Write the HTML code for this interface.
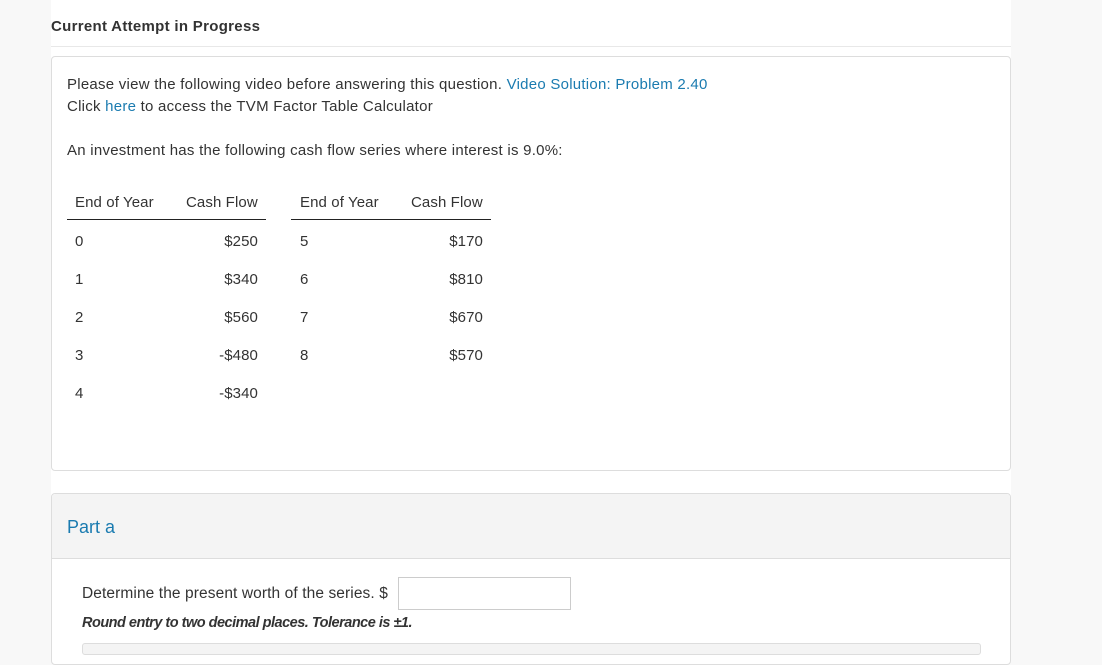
<!DOCTYPE html>
<html><head><meta charset="utf-8"><style>
html,body{margin:0;padding:0;width:1102px;height:648px;overflow:hidden;background:#f8f8f8;font-family:"Liberation Sans",sans-serif;color:#333}
.main{position:absolute;left:51px;top:0;width:960px;height:648px;background:#fff}
.abs{position:absolute;white-space:nowrap}
a{color:#1a7bb0;text-decoration:none}
.t{font-size:15px;letter-spacing:0.1px}
</style></head><body>
<div class="main"></div>
<div class="abs" style="left:51px;top:18px;font-size:15px;font-weight:bold;color:#333;letter-spacing:0.3px">Current Attempt in Progress</div>
<div class="abs" style="left:51px;top:46px;width:960px;height:1px;background:#e8e8e8"></div>
<div class="abs" style="left:51px;top:56px;width:958px;height:413px;border:1px solid #ddd;border-radius:4px;background:#fff"></div>
<div class="abs t" style="left:67px;top:76px;letter-spacing:0.25px">Please view the following video before answering this question. <a>Video Solution: Problem 2.40</a></div>
<div class="abs t" style="left:67px;top:98px;letter-spacing:0.25px">Click <a>here</a> to access the TVM Factor Table Calculator</div>
<div class="abs t" style="left:67px;top:142px;letter-spacing:0.25px">An investment has the following cash flow series where interest is 9.0%:</div>
<div class="abs t" style="left:75px;top:194px">End of Year</div>
<div class="abs t" style="left:186px;top:194px">Cash Flow</div>
<div class="abs t" style="left:300px;top:194px">End of Year</div>
<div class="abs t" style="left:411px;top:194px">Cash Flow</div>
<div class="abs" style="left:67px;top:219px;width:199px;height:1px;background:#222"></div>
<div class="abs" style="left:291px;top:219px;width:200px;height:1px;background:#222"></div>
<div class="abs t" style="left:75px;top:223px;line-height:38px">0<br>1<br>2<br>3<br>4</div>
<div class="abs t" style="left:180px;width:78px;text-align:right;top:223px;line-height:38px">$250<br>$340<br>$560<br>-$480<br>-$340</div>
<div class="abs t" style="left:300px;top:223px;line-height:38px">5<br>6<br>7<br>8</div>
<div class="abs t" style="left:404px;width:79px;text-align:right;top:223px;line-height:38px">$170<br>$810<br>$670<br>$570</div>
<div class="abs" style="left:51px;top:493px;width:958px;height:170px;border:1px solid #ddd;border-radius:4px;background:#fff"></div>
<div class="abs" style="left:52px;top:494px;width:958px;height:64px;background:#f4f4f4;border-bottom:1px solid #ddd;border-radius:4px 4px 0 0"></div>
<div class="abs" style="left:67px;top:517px;font-size:18px;color:#1a7bb0">Part a</div>
<div class="abs t" style="left:82px;top:585px;font-size:15.5px">Determine the present worth of the series. $</div>
<div class="abs" style="left:398px;top:577px;width:171px;height:31px;border:1px solid #ccc;background:#fff"></div>
<div class="abs" style="left:82px;top:615px;font-size:14.5px;font-weight:bold;font-style:italic;letter-spacing:-0.5px">Round entry to two decimal places. Tolerance is ±1.</div>
<div class="abs" style="left:82px;top:643px;width:897px;height:10px;border:1px solid #ddd;background:#f4f4f4;border-radius:3px"></div>
</body></html>
